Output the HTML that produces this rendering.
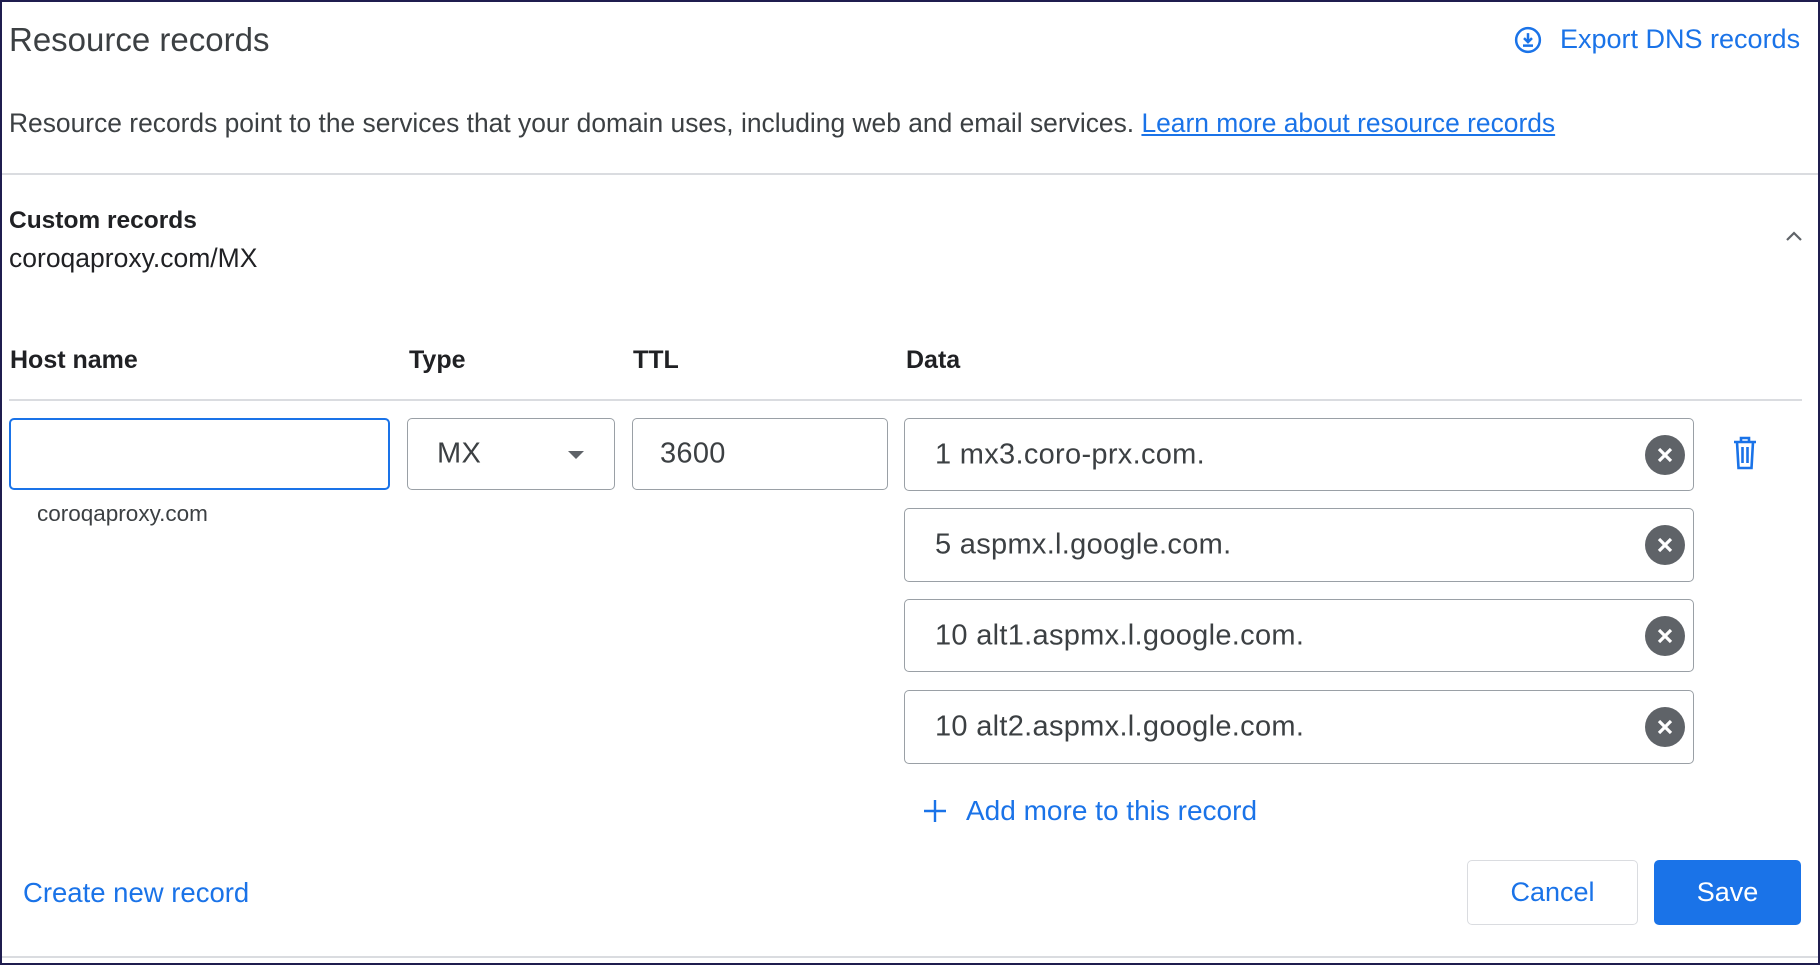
<!DOCTYPE html>
<html><head><meta charset="utf-8"><style>
*{box-sizing:border-box;margin:0;padding:0}
body{width:1820px;height:965px;background:#fff;font-family:"Liberation Sans",sans-serif;color:#202124;position:relative;overflow:hidden}
.frame{position:absolute;left:0;top:0;width:1820px;height:965px;border:2px solid #1f1d4f}
.a{position:absolute;white-space:nowrap}
.box{position:absolute;border:1.5px solid #9aa0a6;border-radius:5px;background:#fff}
.dt{position:absolute;left:30px;top:50%;transform:translateY(-50%);font-size:29px;letter-spacing:0.3px;color:#3c4043}
.clr{position:absolute;right:8px;top:50%;transform:translateY(-50%);width:40px;height:40px;border-radius:50%;background:#5f6368}
.line{position:absolute;height:2px;background:#dadce0}
</style></head><body>
<div class="frame"></div>
<div class="a" style="left:9px;top:21px;font-size:33px;color:#3c4043">Resource records</div>
<svg class="a" style="left:1513px;top:25px" width="30" height="30" viewBox="0 0 24 24"><circle cx="12" cy="12" r="9.5" fill="none" stroke="#1a73e8" stroke-width="2"/><path d="M12 6.5v7M8.8 10.5l3.2 3.2 3.2-3.2M8 16.5h8" fill="none" stroke="#1a73e8" stroke-width="2"/></svg>
<div class="a" style="left:1560px;top:24px;font-size:27px;color:#1a73e8">Export DNS records</div>
<div class="a" style="left:9px;top:108px;font-size:26.4px;color:#3c4043">Resource records point to the services that your domain uses, including web and email services. <span style="color:#1a73e8;text-decoration:underline">Learn more about resource records</span></div>
<div class="line" style="left:2px;right:2px;top:173px"></div>
<div class="a" style="left:9px;top:207px;font-size:24.5px;font-weight:bold">Custom records</div>
<div class="a" style="left:9px;top:243px;font-size:26.5px">coroqaproxy.com/MX</div>
<svg class="a" style="left:1782px;top:225px" width="24" height="24" viewBox="0 0 24 24"><path d="M5 15l7-7 7 7" fill="none" stroke="#5f6368" stroke-width="2.2"/></svg>
<div class="a" style="left:10px;top:346px;font-size:25px;font-weight:bold">Host name</div>
<div class="a" style="left:409px;top:346px;font-size:25px;font-weight:bold">Type</div>
<div class="a" style="left:633px;top:346px;font-size:25px;font-weight:bold">TTL</div>
<div class="a" style="left:906px;top:346px;font-size:25px;font-weight:bold">Data</div>
<div class="line" style="left:9px;width:1793px;top:399px"></div>
<div class="box" style="left:9px;top:418px;width:381px;height:72px;border:2.5px solid #1a73e8"></div>
<div class="a" style="left:37px;top:501px;font-size:22.5px;color:#3c4043">coroqaproxy.com</div>
<div class="box" style="left:407px;top:418px;width:208px;height:72px"><div class="dt" style="left:29px">MX</div><div style="position:absolute;left:160px;top:32px;border-left:8px solid transparent;border-right:8px solid transparent;border-top:8px solid #5f6368"></div></div>
<div class="box" style="left:632px;top:418px;width:256px;height:72px"><div class="dt" style="left:27px">3600</div></div>
<div class="box" style="left:904px;top:418px;width:790px;height:73px"><div class="dt">1 mx3.coro-prx.com.</div><svg class="clr" viewBox="0 0 40 40"><path d="M14 14l12 12M26 14L14 26" stroke="#fff" stroke-width="3.2"/></svg></div>
<div class="box" style="left:904px;top:508px;width:790px;height:74px"><div class="dt">5 aspmx.l.google.com.</div><svg class="clr" viewBox="0 0 40 40"><path d="M14 14l12 12M26 14L14 26" stroke="#fff" stroke-width="3.2"/></svg></div>
<div class="box" style="left:904px;top:599px;width:790px;height:73px"><div class="dt">10 alt1.aspmx.l.google.com.</div><svg class="clr" viewBox="0 0 40 40"><path d="M14 14l12 12M26 14L14 26" stroke="#fff" stroke-width="3.2"/></svg></div>
<div class="box" style="left:904px;top:690px;width:790px;height:74px"><div class="dt">10 alt2.aspmx.l.google.com.</div><svg class="clr" viewBox="0 0 40 40"><path d="M14 14l12 12M26 14L14 26" stroke="#fff" stroke-width="3.2"/></svg></div>
<svg class="a" style="left:1730px;top:435px" width="30" height="36" viewBox="0 0 30 36"><path d="M4 7h22M11 7V3h8v4M7 7l1.5 26h13L23 7M12.5 12v16M17.5 12v16" fill="none" stroke="#1a73e8" stroke-width="2.6"/></svg>
<svg class="a" style="left:922px;top:798px" width="26" height="26" viewBox="0 0 26 26"><path d="M13 2v22M2 13h22" stroke="#1a73e8" stroke-width="2.4"/></svg>
<div class="a" style="left:966px;top:795px;font-size:28px;color:#1a73e8">Add more to this record</div>
<div class="a" style="left:23px;top:877px;font-size:27.5px;color:#1a73e8">Create new record</div>
<div class="box" style="left:1467px;top:860px;width:171px;height:65px;border:1.5px solid #dadce0;color:#1a73e8;font-size:27px;text-align:center;line-height:62px">Cancel</div>
<div class="box" style="left:1654px;top:860px;width:147px;height:65px;border:none;background:#1a73e8;color:#fff;font-size:27px;text-align:center;line-height:65px">Save</div>
<div class="line" style="left:2px;right:2px;top:956px"></div>
</body></html>
